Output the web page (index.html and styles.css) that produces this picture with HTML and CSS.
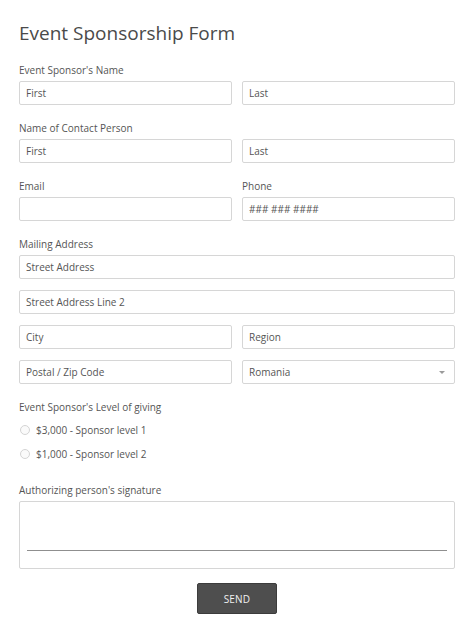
FILE: index.html
```html
<!DOCTYPE html>
<html lang="en">
<head>
<meta charset="utf-8">
<title>Event Sponsorship Form</title>
<link rel="stylesheet" href="styles.css">
</head>
<body>
<form class="form">
  <h1 class="form-title">Event Sponsorship Form</h1>

  <div class="field">
    <label class="field-label">Event Sponsor's Name</label>
    <div class="pair">
      <input class="text-input" type="text" placeholder="First">
      <input class="text-input" type="text" placeholder="Last">
    </div>
  </div>

  <div class="field">
    <label class="field-label">Name of Contact Person</label>
    <div class="pair">
      <input class="text-input" type="text" placeholder="First">
      <input class="text-input" type="text" placeholder="Last">
    </div>
  </div>

  <div class="pair">
    <div class="field">
      <label class="field-label">Email</label>
      <input class="text-input" type="email">
    </div>
    <div class="field">
      <label class="field-label">Phone</label>
      <input class="text-input" type="tel" placeholder="### ### ####">
    </div>
  </div>

  <div class="field">
    <label class="field-label">Mailing Address</label>
    <div class="stack">
      <input class="text-input" type="text" placeholder="Street Address">
      <input class="text-input" type="text" placeholder="Street Address Line 2">
      <div class="pair">
        <input class="text-input" type="text" placeholder="City">
        <input class="text-input" type="text" placeholder="Region">
      </div>
      <div class="pair">
        <input class="text-input" type="text" placeholder="Postal / Zip Code">
        <div class="select-wrap">
          <select class="select-input">
            <option>Romania</option>
          </select>
          <span class="select-caret"></span>
        </div>
      </div>
    </div>
  </div>

  <div class="field">
    <label class="field-label">Event Sponsor's Level of giving</label>
    <div class="radios">
      <label class="radio-row"><input class="radio" type="radio" name="level"><span>$3,000 - Sponsor level 1</span></label>
      <label class="radio-row"><input class="radio" type="radio" name="level"><span>$1,000 - Sponsor level 2</span></label>
    </div>
  </div>

  <div class="field field-signature">
    <label class="field-label">Authorizing person's signature</label>
    <div class="signature">
      <div class="signature-line"></div>
    </div>
  </div>

  <div class="actions">
    <button class="send" type="button">SEND</button>
  </div>
</form>
</body>
</html>
```

FILE: styles.css
```css
* {
  box-sizing: border-box;
}

html, body {
  margin: 0;
  background: #ffffff;
}

body {
  font-family: "Open Sans", "Noto Sans", sans-serif;
  color: #555555;
}

.form {
  padding: 20px 19px 0 19px;
  display: flex;
  flex-direction: column;
}

.form-title {
  margin: 0 0 17px 0;
  font-size: 19px;
  line-height: 26px;
  font-weight: 400;
  color: #4a4a4a;
}

.field {
  display: flex;
  flex-direction: column;
  margin-bottom: 16px;
}

.field-label {
  font-size: 10px;
  line-height: 14px;
  margin-bottom: 4px;
  color: #555555;
}

.pair {
  display: grid;
  grid-template-columns: 1fr 1fr;
  column-gap: 10px;
}

.stack {
  display: flex;
  flex-direction: column;
  gap: 11px;
}

.text-input,
.select-input {
  display: block;
  width: 100%;
  height: 24px;
  margin: 0;
  padding: 0 6px;
  border: 1px solid #d6d6d6;
  border-radius: 2px;
  background: #ffffff;
  font-family: "Open Sans", "Noto Sans", sans-serif;
  font-size: 10px;
  color: #555555;
  outline: none;
}

.text-input::placeholder {
  color: #555555;
  opacity: 1;
}

.select-wrap {
  position: relative;
  display: flex;
}

.select-input {
  appearance: none;
  -webkit-appearance: none;
}

/* small down caret drawn over the right end of the country select */
.select-caret {
  position: absolute;
  right: 10px;
  top: 11px;
  width: 0;
  height: 0;
  border-left: 3px solid transparent;
  border-right: 3px solid transparent;
  border-top: 3px solid #9a9a9a;
  pointer-events: none;
}

.radios {
  display: flex;
  flex-direction: column;
}

.radio-row {
  display: flex;
  align-items: center;
  height: 24px;
  font-size: 10px;
  color: #555555;
}

.radio {
  appearance: none;
  -webkit-appearance: none;
  width: 10px;
  height: 10px;
  margin: 0 6px 0 1px;
  border: 1px solid #d4d4d4;
  border-radius: 50%;
  background: #fafafa;
}

.field-signature {
  margin-top: 1px;
  margin-bottom: 14px;
}

.signature {
  height: 68px;
  border: 1px solid #d6d6d6;
  border-radius: 2px;
  padding: 48px 7px 0 7px;
}

.signature-line {
  height: 1px;
  background: #8f8f8f;
}

.actions {
  display: flex;
  justify-content: center;
}

.send {
  width: 80px;
  height: 31px;
  border: 1px solid #3c3c3c;
  border-radius: 2px;
  background: #4e4e4e;
  color: #f0f0f0;
  font-family: "Open Sans", "Noto Sans", sans-serif;
  font-size: 10px;
  letter-spacing: 0.2px;
  padding: 0;
}
```
